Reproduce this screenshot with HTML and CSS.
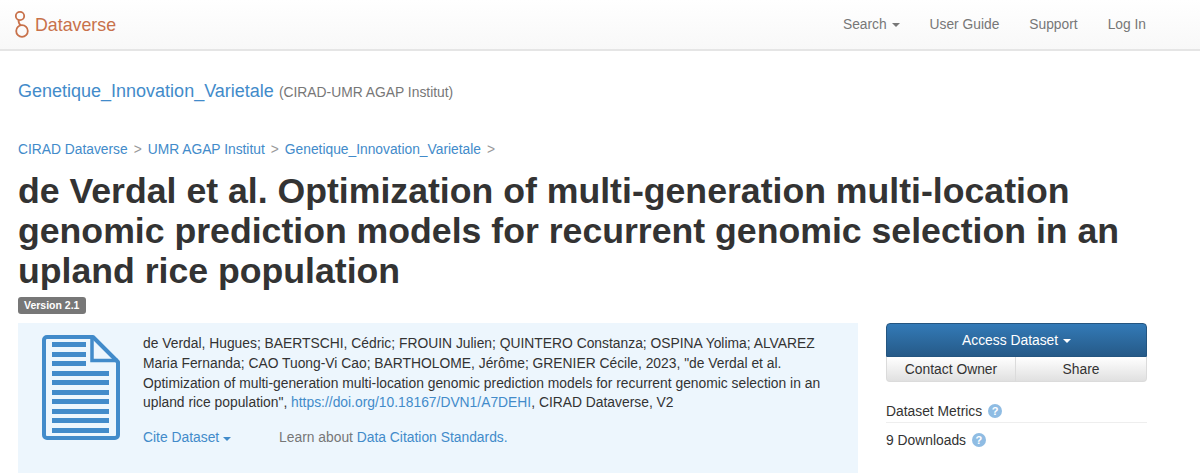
FILE: index.html
```html
<!DOCTYPE html>
<html lang="en">
<head>
<meta charset="utf-8">
<title>Dataverse</title>
<link rel="stylesheet" href="styles.css">
</head>
<body>
<header class="navbar">
  <a class="brand">
    <svg class="brand-icon" width="16" height="29" viewBox="0 0 16 29" aria-hidden="true">
      <circle cx="5" cy="6" r="4.200" fill="none" stroke="#c8714a" stroke-width="1.800"/>
      <path d="M3.500 10 Q3.500 14 6 15.500" fill="none" stroke="#c8714a" stroke-width="1.800"/>
      <circle cx="7" cy="21" r="5.800" fill="none" stroke="#c8714a" stroke-width="1.800"/>
    </svg>
    <span>Dataverse</span>
  </a>
  <nav class="nav">
    <a>Search <i class="caret"></i></a>
    <a>User Guide</a>
    <a>Support</a>
    <a>Log In</a>
  </nav>
</header>
<main class="page">
  <div class="dv-title"><a>Genetique_Innovation_Varietale</a> <span>(CIRAD-UMR AGAP Institut)</span></div>
  <div class="crumbs">
    <a>CIRAD Dataverse</a><span>&gt;</span><a>UMR AGAP Institut</a><span>&gt;</span><a>Genetique_Innovation_Varietale</a><span>&gt;</span>
  </div>
  <h1>de Verdal et al. Optimization of multi-generation multi-location genomic prediction models for recurrent genomic selection in an upland rice population</h1>
  <div class="label">Version 2.1</div>
  <div class="columns">
    <section class="citation">
      <svg class="doc" width="78" height="105" viewBox="0 0 78 105" aria-hidden="true">
        <path d="M5 2H51L76 27V100a3 3 0 0 1-3 3H5a3 3 0 0 1-3-3V5a3 3 0 0 1 3-3z" fill="none" stroke="#428bca" stroke-width="4" stroke-linejoin="round"/>
        <path d="M50 2V25.500H76" fill="none" stroke="#428bca" stroke-width="3.500"/>
        <path d="M10 7h34v5H10zM10 17h34v5H10zM10 26h34v5H10zM10 36h57v5H10zM10 45h57v5H10zM10 55h57v5H10zM10 64h57v5H10zM10 74h57v5H10zM10 83h57v5H10zM10 93h57v5H10z" fill="#428bca"/>
      </svg>
      <div class="cite-body">
        <p>de Verdal, Hugues; BAERTSCHI, Cédric; FROUIN Julien; QUINTERO Constanza; OSPINA Yolima; ALVAREZ Maria Fernanda; CAO Tuong-Vi Cao; BARTHOLOME, Jérôme; GRENIER Cécile, 2023, "de Verdal et al. Optimization of multi-generation multi-location genomic prediction models for recurrent genomic selection in an upland rice population", <a>https://doi.org/10.18167/DVN1/A7DEHI</a>, CIRAD Dataverse, V2</p>
        <div class="cite-links">
          <a>Cite Dataset <i class="caret"></i></a>
          <span>Learn about <a>Data Citation Standards.</a></span>
        </div>
      </div>
    </section>
    <aside class="side">
      <button class="btn-primary">Access Dataset <i class="caret"></i></button>
      <div class="btn-group">
        <button class="btn-default">Contact Owner</button>
        <button class="btn-default">Share</button>
      </div>
      <div class="metric metric-head">Dataset Metrics <i class="help">?</i></div>
      <div class="metric">9 Downloads <i class="help">?</i></div>
    </aside>
  </div>
</main>
</body>
</html>
```
FILE: styles.css
```css
* { box-sizing: border-box; }
html, body { margin: 0; height: 476px; overflow: hidden; }
body { font-family: "Liberation Sans", Arial, sans-serif; font-size: 13.85px; line-height: 20px; color: #333; background: #fff; }
a { color: #428bca; text-decoration: none; }
.navbar { height: 51px; display: flex; justify-content: space-between; align-items: center; padding: 0 54px 0 15px; background: linear-gradient(#fff, #f8f8f8); border-bottom: 2px solid #e5e5e5; }
.brand { display: flex; align-items: center; gap: 4px; color: #c8714a; font-size: 17.8px; }
.brand-icon { display: block; }
.nav { display: flex; gap: 30px; font-size: 13.8px; padding-top: 1px; }
.nav a { color: #777; }
.caret { display: inline-block; width: 0; height: 0; margin-left: 1px; vertical-align: middle; border-top: 4px solid; border-left: 4px solid transparent; border-right: 4px solid transparent; }
.page { padding: 29px 53px 0 18px; }
.dv-title { font-size: 18px; line-height: 22px; }
.dv-title span { font-size: 13.85px; color: #777; }
.crumbs { margin-top: 37px; display: flex; gap: 5px; line-height: 20px; font-size: 13.8px; }
.crumbs span { color: #999; padding: 0 1px; }
h1 { margin: 11px 0 0; font-size: 35.65px; line-height: 40px; font-weight: 700; }
.label { display: inline-block; margin-top: 6px; padding: 0 6px; width: 68px; height: 17px; font-size: 10.5px; line-height: 16px; font-weight: 700; color: #fff; background: #777; border-radius: 3px; vertical-align: top; white-space: nowrap; }
.columns { display: flex; justify-content: space-between; margin-top: 9px; }
.citation { width: 840px; height: 150px; background: #edf6fd; display: flex; padding: 12px 14px 0 24px; gap: 23px; }
.doc { flex: none; }
.cite-body { flex: 1; margin-top: -1px; }
.cite-body p { margin: 0; line-height: 19.8px; }
.cite-links { margin-top: 14px; display: flex; gap: 48px; color: #777; }
.cite-links .caret { margin-left: 0; }
.side { width: 261px; }
.btn-primary { display: block; width: 100%; height: 34px; font: inherit; color: #fff; border: 1px solid #245580; border-radius: 4px 4px 0 0; background: linear-gradient(#337ab7, #265a88); }
.btn-group { display: flex; }
.btn-default { flex: 1; height: 25px; padding: 0; font: inherit; color: #333; border: 1px solid #dbdbdb; border-top: 0; background: linear-gradient(#fff, #e0e0e0); }
.btn-default:first-child { flex: none; width: 130px; border-radius: 0 0 0 4px; }
.btn-default:last-child { border-left: 0; border-radius: 0 0 4px 0; }
.metric { line-height: 20px; }
.metric-head { margin-top: 19px; padding-bottom: 1px; border-bottom: 1px solid #eee; }
.metric + .metric { margin-top: 7px; }
.help { display: inline-block; width: 14px; height: 14px; border-radius: 50%; background: #8fbce3; color: #fff; font: bold 11px/14px "Liberation Sans", sans-serif; text-align: center; vertical-align: 1px; margin-left: 2px; }
```
